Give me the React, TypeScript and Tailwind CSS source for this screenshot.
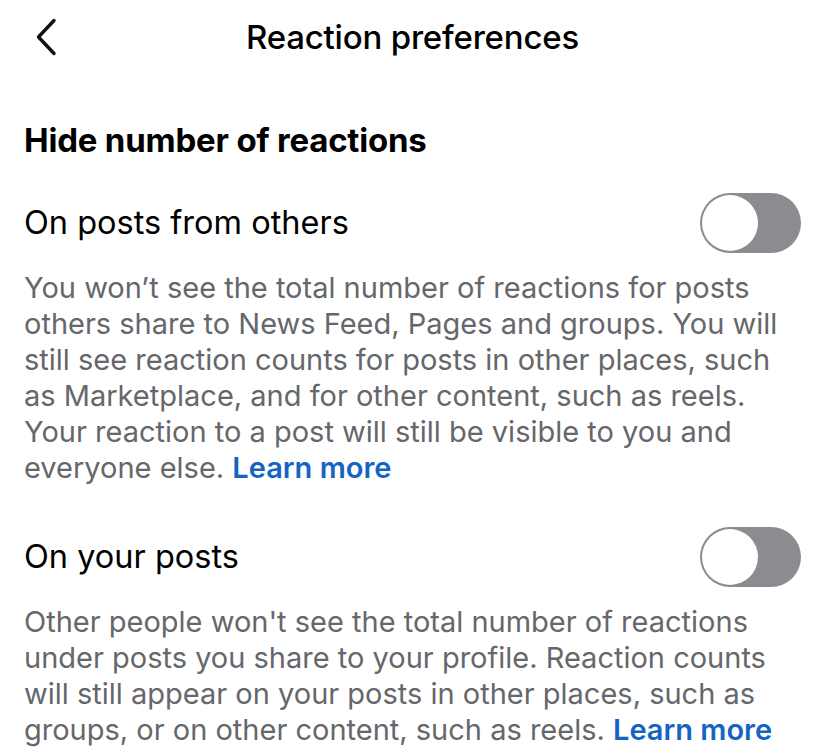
import React, { useState } from "react";

function Toggle({ on, onClick }: { on: boolean; onClick: () => void }) {
  return (
    <button
      type="button"
      onClick={onClick}
      className={`flex items-center w-[101px] h-[60px] rounded-full p-[2px] shrink-0 ${
        on ? "bg-[#0866ff] justify-end" : "bg-[#8b8b90] justify-start"
      }`}
    >
      <span className="block w-[56px] h-[56px] rounded-full bg-white" />
    </button>
  );
}

export default function App() {
  const [others, setOthers] = useState(false);
  const [mine, setMine] = useState(false);

  return (
    <div
      className="w-[825px] h-[750px] bg-white overflow-hidden text-black"
      style={{ fontFamily: "Inter, 'Noto Sans', sans-serif" }}
    >
      {/* header */}
      <div className="relative flex items-center justify-center h-[76px]">
        <button type="button" className="absolute left-[35px] top-[17px]">
          <svg width="22" height="40" viewBox="0 0 22 40" fill="none">
            <path d="M19 3.5 L3.5 20 L19 36.5" stroke="#111" strokeWidth="3.4" strokeLinecap="round" strokeLinejoin="round" />
          </svg>
        </button>
        <h1 className="text-[33px] font-medium tracking-[-0.2px]">Reaction preferences</h1>
      </div>

      <div className="px-6">
        <h2 className="mt-[44px] text-[33px] font-bold leading-[40px] tracking-[-0.2px]">Hide number of reactions</h2>

        {/* posts from others */}
        <div className="mt-[33px] flex items-center justify-between">
          <span className="text-[32.5px] leading-[40px]">On posts from others</span>
          <Toggle on={others} onClick={() => setOthers((v) => !v)} />
        </div>
        <p className="mt-[17px] text-[29px] leading-[36px] text-[#65676b]">
          You won’t see the total number of reactions for posts
          <br />
          others share to News Feed, Pages and groups. You will
          <br />
          still see reaction counts for posts in other places, such
          <br />
          as Marketplace, and for other content, such as reels.
          <br />
          Your reaction to a post will still be visible to you and
          <br />
          everyone else. <a href="#" className="font-semibold text-[#1464c4]">Learn more</a>
        </p>

        {/* your posts */}
        <div className="mt-[41px] flex items-center justify-between">
          <span className="text-[32.5px] leading-[40px]">On your posts</span>
          <Toggle on={mine} onClick={() => setMine((v) => !v)} />
        </div>
        <p className="mt-[17px] text-[29px] leading-[36px] text-[#65676b]">
          Other people won't see the total number of reactions
          <br />
          under posts you share to your profile. Reaction counts
          <br />
          will still appear on your posts in other places, such as
          <br />
          groups, or on other content, such as reels.{" "}
          <a href="#" className="font-semibold text-[#1464c4]">Learn more</a>
        </p>
      </div>
    </div>
  );
}
